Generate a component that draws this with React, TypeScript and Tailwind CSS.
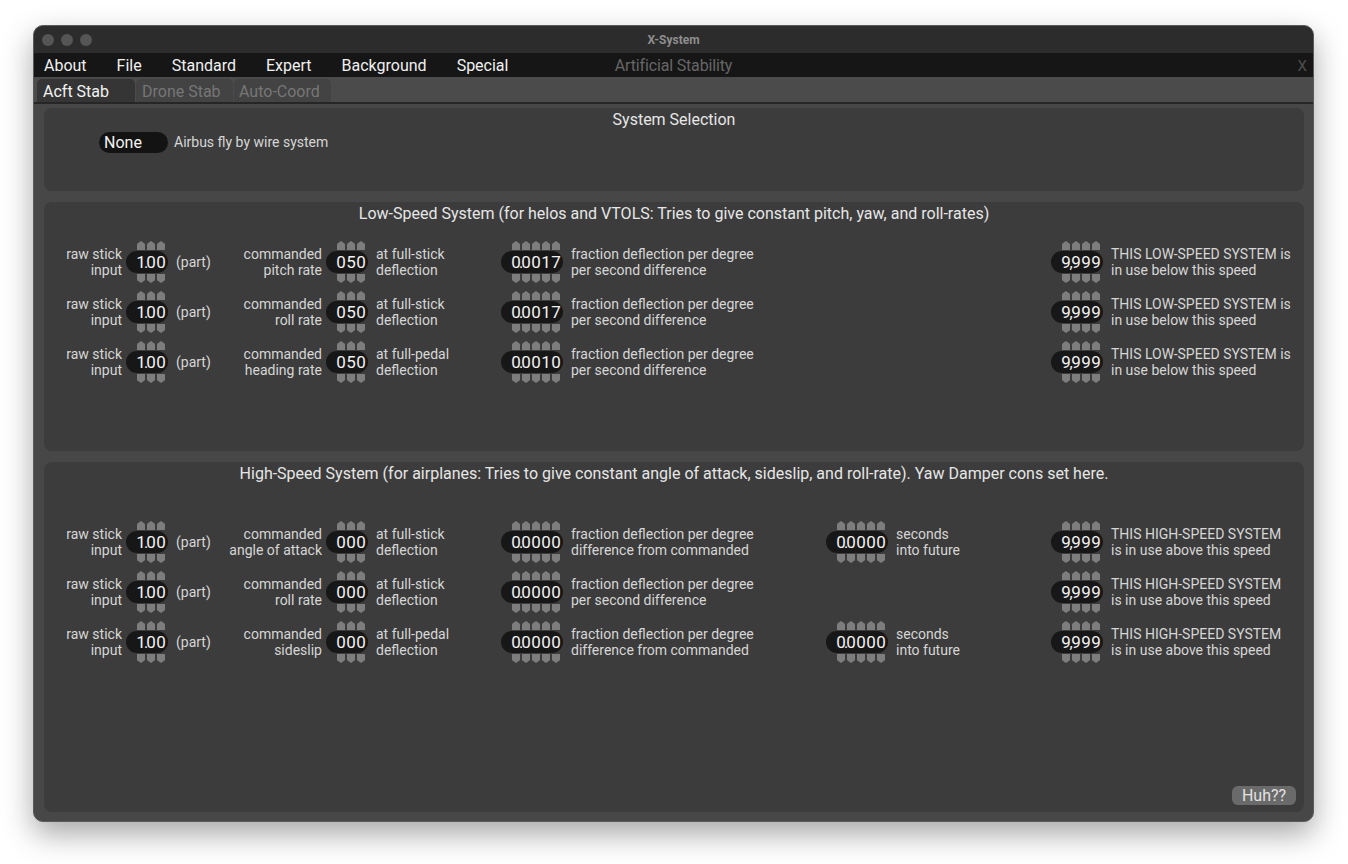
import React from 'react';

type Row = {
  l1: string[];
  v1: string;
  u1: string;
  l2: string[];
  v2: string;
  t2: string[];
  v3: string;
  t3: string[];
  v4?: string;
  t4?: string[];
  v5: string;
  t5: string[];
};

const lowRows: Row[] = [
  {
    l1: ['raw stick', 'input'], v1: '1.00', u1: '(part)',
    l2: ['commanded', 'pitch rate'], v2: '050', t2: ['at full-stick', 'deflection'],
    v3: '0.0017', t3: ['fraction deflection per degree', 'per second difference'],
    v5: '9,999', t5: ['THIS LOW-SPEED SYSTEM is', 'in use below this speed'],
  },
  {
    l1: ['raw stick', 'input'], v1: '1.00', u1: '(part)',
    l2: ['commanded', 'roll rate'], v2: '050', t2: ['at full-stick', 'deflection'],
    v3: '0.0017', t3: ['fraction deflection per degree', 'per second difference'],
    v5: '9,999', t5: ['THIS LOW-SPEED SYSTEM is', 'in use below this speed'],
  },
  {
    l1: ['raw stick', 'input'], v1: '1.00', u1: '(part)',
    l2: ['commanded', 'heading rate'], v2: '050', t2: ['at full-pedal', 'deflection'],
    v3: '0.0010', t3: ['fraction deflection per degree', 'per second difference'],
    v5: '9,999', t5: ['THIS LOW-SPEED SYSTEM is', 'in use below this speed'],
  },
];

const highRows: Row[] = [
  {
    l1: ['raw stick', 'input'], v1: '1.00', u1: '(part)',
    l2: ['commanded', 'angle of attack'], v2: '000', t2: ['at full-stick', 'deflection'],
    v3: '0.0000', t3: ['fraction deflection per degree', 'difference from commanded'],
    v4: '0.0000', t4: ['seconds', 'into future'],
    v5: '9,999', t5: ['THIS HIGH-SPEED SYSTEM', 'is in use above this speed'],
  },
  {
    l1: ['raw stick', 'input'], v1: '1.00', u1: '(part)',
    l2: ['commanded', 'roll rate'], v2: '000', t2: ['at full-stick', 'deflection'],
    v3: '0.0000', t3: ['fraction deflection per degree', 'per second difference'],
    v5: '9,999', t5: ['THIS HIGH-SPEED SYSTEM', 'is in use above this speed'],
  },
  {
    l1: ['raw stick', 'input'], v1: '1.00', u1: '(part)',
    l2: ['commanded', 'sideslip'], v2: '000', t2: ['at full-pedal', 'deflection'],
    v3: '0.0000', t3: ['fraction deflection per degree', 'difference from commanded'],
    v4: '0.0000', t4: ['seconds', 'into future'],
    v5: '9,999', t5: ['THIS HIGH-SPEED SYSTEM', 'is in use above this speed'],
  },
];

const Arrow = ({ up }: { up: boolean }) => (
  <svg width="8" height="9" viewBox="0 0 8 9">
    {up ? (
      <path d="M0 3.5 Q0 3 .5 2.6 L3.5 .3 Q4 0 4.5 .3 L7.5 2.6 Q8 3 8 3.5 V9 H0 Z" fill="#7d7d7d" />
    ) : (
      <path d="M0 0 H8 V5.5 Q8 6 7.5 6.4 L4.5 8.7 Q4 9 3.5 8.7 L.5 6.4 Q0 6 0 5.5 Z" fill="#7d7d7d" />
    )}
  </svg>
);

// digit picker: arrows above and below each digit, value in a black pill
const Stepper = ({ value }: { value: string }) => {
  const cells: { d: string; sep?: string }[] = [];
  for (const ch of value) {
    if (/\d/.test(ch)) cells.push({ d: ch });
    else cells[cells.length - 1].sep = ch;
  }
  return (
    <div className="flex flex-col shrink-0">
      <div className="flex h-[9px] pl-[10px]">
        {cells.map((_, i) => (
          <div key={i} className="w-[10px] flex justify-center">
            <Arrow up />
          </div>
        ))}
      </div>
      <div className="my-[1px] h-[22px] rounded-full bg-[#171717] flex items-center pl-[10px] pr-[2px]">
        {cells.map((c, i) => (
          <div key={i} className="relative w-[10px] text-center text-[17px] leading-none text-[#f2f2f2]">
            {c.d}
            {c.sep && (
              <span className="absolute top-0 right-0 translate-x-1/2 text-[16px] leading-[17px]">{c.sep}</span>
            )}
          </div>
        ))}
      </div>
      <div className="flex h-[9px] pl-[10px]">
        {cells.map((_, i) => (
          <div key={i} className="w-[10px] flex justify-center">
            <Arrow up={false} />
          </div>
        ))}
      </div>
    </div>
  );
};

const Lines = ({ lines, right }: { lines: string[]; right?: boolean }) => (
  <div className={`text-[14px] leading-[16px] text-[#d6d6d6] whitespace-nowrap ${right ? 'text-right' : ''}`}>
    {lines.map((l) => (
      <div key={l}>{l}</div>
    ))}
  </div>
);

const ParamRow = ({ r }: { r: Row }) => (
  <div className="flex items-center h-[42px]">
    <div className="w-[182px] flex items-center">
      <div className="w-[78px]">
        <Lines lines={r.l1} right />
      </div>
      <div className="ml-[4px]">
        <Stepper value={r.v1} />
      </div>
      <div className="ml-[8px] text-[14px] text-[#d6d6d6]">{r.u1}</div>
    </div>
    <div className="w-[275px] flex items-center">
      <div className="w-[96px] flex justify-end">
        <Lines lines={r.l2} right />
      </div>
      <div className="ml-[4px]">
        <Stepper value={r.v2} />
      </div>
      <div className="ml-[8px]">
        <Lines lines={r.t2} />
      </div>
    </div>
    <div className="w-[325px] flex items-center">
      <Stepper value={r.v3} />
      <div className="ml-[8px]">
        <Lines lines={r.t3} />
      </div>
    </div>
    <div className="w-[225px] flex items-center">
      {r.v4 && (
        <>
          <Stepper value={r.v4} />
          <div className="ml-[8px]">
            <Lines lines={r.t4 ?? []} />
          </div>
        </>
      )}
    </div>
    <div className="flex items-center">
      <Stepper value={r.v5} />
      <div className="ml-[8px]">
        <Lines lines={r.t5} />
      </div>
    </div>
  </div>
);

export default function App() {
  return (
    <div className="min-h-screen bg-white pt-[25px] pl-[33px]" style={{ fontFamily: 'Roboto, "Liberation Sans", sans-serif' }}>
      <div className="w-[1281px] h-[797px] rounded-[10px] border border-[#5a5a5a] bg-[#474747] overflow-hidden flex flex-col shadow-[0_12px_30px_rgba(0,0,0,0.35)]">
        {/* title bar */}
        <div className="h-[27px] bg-[#2c2c2c] grid grid-cols-[1fr_auto_1fr] items-center">
          <div className="flex items-center gap-[7px] pl-[8px]">
            <div className="w-[12px] h-[12px] rounded-full bg-[#555]" />
            <div className="w-[12px] h-[12px] rounded-full bg-[#555]" />
            <div className="w-[12px] h-[12px] rounded-full bg-[#555]" />
          </div>
          <div className="text-[12px] font-bold text-[#8e8e8e]">X-System</div>
          <div />
        </div>
        {/* menu bar */}
        <div className="h-[24px] bg-[#161616] grid grid-cols-[1fr_auto_1fr] items-center pt-[1px]">
          <div className="flex gap-[30px] pl-[10px] text-[16px] text-[#f0f0f0]">
            <span>About</span>
            <span>File</span>
            <span>Standard</span>
            <span>Expert</span>
            <span>Background</span>
            <span>Special</span>
          </div>
          <div className="text-[16px] text-[#666] tracking-[-0.01em]">Artificial Stability</div>
          <div className="flex justify-end pr-[6px] text-[15px] text-[#4e4e4e]">X</div>
        </div>
        {/* tabs */}
        <div className="h-[25px] bg-[#4b4b4b] flex items-end pl-[3px] gap-[1px]">
          <div className="h-[23px] w-[98px] rounded-t-[5px] bg-[#353535] pl-[6px] pt-[3px] text-[16px] leading-[20px] text-[#f2f2f2]">Acft Stab</div>
          <div className="h-[23px] w-[97px] rounded-t-[5px] bg-[#434343] pl-[6px] pt-[3px] text-[16px] leading-[20px] text-[#767676]">Drone Stab</div>
          <div className="h-[23px] w-[97px] rounded-t-[5px] bg-[#434343] pl-[5px] pt-[3px] text-[16px] leading-[20px] text-[#767676]">Auto-Coord</div>
        </div>
        <div className="h-[2px] bg-[#262626]" />
        {/* body */}
        <div className="flex-1 flex flex-col gap-[11px] pt-[4px] pb-[9px] pl-[10px] pr-[9px]">
          <div className="h-[83px] rounded-[8px] bg-[#3c3c3c] flex flex-col">
            <div className="mt-[2px] text-center text-[16px] leading-[20px] text-[#e6e6e6]">System Selection</div>
            <div className="mt-[1px] ml-[55px] flex items-center">
              <div className="w-[69px] h-[21px] rounded-full bg-[#131313] pl-[5px] text-[16px] leading-[21px] text-[#f2f2f2]">None</div>
              <div className="ml-[6px] pt-[1px] text-[14px] text-[#d6d6d6]">Airbus fly by wire system</div>
            </div>
          </div>
          <div className="h-[249px] rounded-[8px] bg-[#3c3c3c] flex flex-col">
            <div className="mt-[2px] text-center text-[16px] leading-[20px] text-[#e6e6e6]">
              Low-Speed System (for helos and VTOLS: Tries to give constant pitch, yaw, and roll-rates)
            </div>
            <div className="mt-[17px] flex flex-col gap-[8px]">
              {lowRows.map((r, i) => (
                <ParamRow key={i} r={r} />
              ))}
            </div>
          </div>
          <div className="flex-1 rounded-[8px] bg-[#3c3c3c] flex flex-col">
            <div className="mt-[2px] text-center text-[16px] leading-[20px] text-[#e6e6e6]">
              High-Speed System (for airplanes: Tries to give constant angle of attack, sideslip, and roll-rate). Yaw Damper cons set here.
            </div>
            <div className="mt-[37px] flex flex-col gap-[8px]">
              {highRows.map((r, i) => (
                <ParamRow key={i} r={r} />
              ))}
            </div>
            <div className="mt-auto self-end mr-[8px] mb-[7px] w-[64px] h-[19px] rounded-[6px] bg-[#6a6a6a] text-center text-[16px] leading-[19px] text-[#e2e2e2]">
              Huh??
            </div>
          </div>
        </div>
      </div>
    </div>
  );
}
